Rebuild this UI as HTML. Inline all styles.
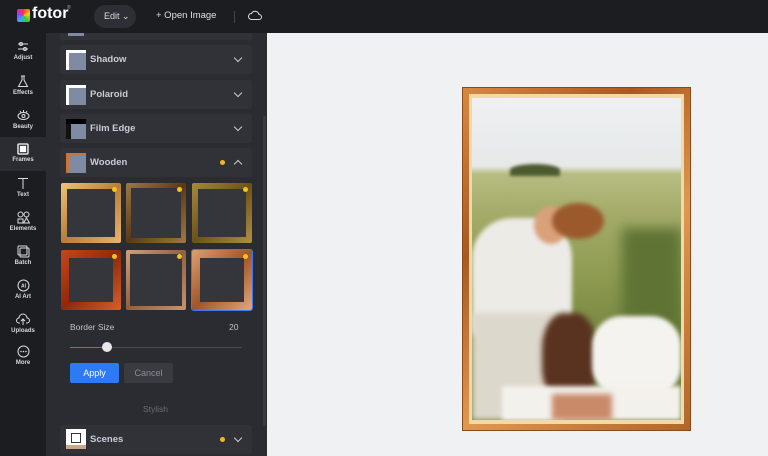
<!DOCTYPE html>
<html><head><meta charset="utf-8"><style>
*{box-sizing:border-box;margin:0;padding:0}
body{width:768px;height:456px;overflow:hidden;background:#f0f1f3;font-family:"Liberation Sans",sans-serif;position:relative}
.top{position:absolute;left:0;top:0;width:768px;height:33px;background:#1c1d21}
.side{position:absolute;left:0;top:33px;width:46px;height:423px;background:#1c1d21}
.panel{position:absolute;left:46px;top:33px;width:221px;height:423px;background:#2b2c31}
.canvas{position:absolute;left:267px;top:33px;width:501px;height:423px;background:#f0f1f3}
.si{position:absolute;left:0;width:46px;text-align:center;color:#d8d9de;font-size:6px;font-weight:bold}
.si svg{display:block;margin:0 auto 2px}
.row{position:absolute;left:60px;width:192px;height:29px;background:#313237;border-radius:3px;color:#c9ccd8;font-size:9.5px;font-weight:bold}
.row .th{position:absolute;left:6px;top:5px;width:20px;height:20px;background:#7f8aa3}
.row .t{position:absolute;left:30px;top:9px}
.chev{position:absolute;right:11px;top:10px;width:6px;height:6px;border-right:1.5px solid #ccc;border-bottom:1.5px solid #ccc;transform:rotate(45deg)}
.up{transform:rotate(-135deg);top:13px}
.dot{position:absolute;right:27px;top:12px;width:5px;height:5px;border-radius:50%;background:#f6b51e}
.fr{position:absolute;width:60px;height:60px;border-radius:2px}
.fr i{position:absolute;left:6px;top:6px;right:6px;bottom:6px;background:#35363b}
.fr b{position:absolute;right:4px;top:4px;width:5px;height:5px;border-radius:50%;background:#f6c21e}
.p{position:absolute}
</style></head><body>
<div class="top">
 <div style="position:absolute;left:17px;top:9px;width:13px;height:13px;border-radius:2px;background:conic-gradient(#f33,#fc0,#3c3,#3af,#a3f,#f33)"></div>
 <div style="position:absolute;left:32px;top:5px;color:#fff;font-size:16px;font-weight:bold">fotor</div>
 <div style="position:absolute;left:67px;top:5px;color:#aaa;font-size:5px">®</div>
 <div style="position:absolute;left:94px;top:5px;width:42px;height:23px;border-radius:12px;background:#2e2f34;color:#ddd;font-size:9px;line-height:23px;padding-left:10px">Edit ⌄</div>
 <div style="position:absolute;left:156px;top:10px;color:#e0e0e0;font-size:9.5px">+ Open Image</div>
 <div style="position:absolute;left:234px;top:11px;width:1px;height:12px;background:#444"></div>
 <svg style="position:absolute;left:248px;top:10px" width="14" height="10" viewBox="0 0 14 10"><path d="M3.5 9.5h7.5a2.5 2.5 0 0 0 0-5 4 4 0 0 0-7.5-1A3 3 0 0 0 3.5 9.5z" fill="none" stroke="#ddd" stroke-width="1"/></svg>
</div>
<div class="side">
 <div class="si" style="top:8px"><svg width="12" height="12" viewBox="0 0 12 12" stroke="#ddd" fill="none"><path d="M1 3h10M1 8h10"/><circle cx="4" cy="3" r="1.5"/><circle cx="8" cy="8" r="1.5"/></svg>Adjust</div>
 <div class="si" style="top:42px"><svg width="12" height="13" viewBox="0 0 12 13" stroke="#ddd" fill="none"><path d="M4 1h4M5 1v4L1.5 11.5h9L7 5V1"/></svg>Effects</div>
 <div class="si" style="top:76px"><svg width="13" height="13" viewBox="0 0 13 13" stroke="#ddd" fill="none"><ellipse cx="6.5" cy="7" rx="5.5" ry="3.5"/><circle cx="6.5" cy="7" r="1.5"/><path d="M3 2l1 1.5M6.5 1v2M10 2L9 3.5"/></svg>Beauty</div>
 <div style="position:absolute;left:0;top:104px;width:46px;height:34px;background:#2b2c31"></div>
 <div class="si" style="top:110px"><svg width="12" height="12" viewBox="0 0 12 12" fill="none" stroke="#fff" stroke-width="1.3"><rect x="1" y="1" width="10" height="10" rx="1"/><rect x="3.5" y="3.5" width="5" height="5" fill="#fff"/></svg>Frames</div>
 <div class="si" style="top:144px"><svg width="12" height="13" viewBox="0 0 12 13" fill="none" stroke="#ddd"><path d="M1 1.5h10M6 1.5V12"/></svg>Text</div>
 <div class="si" style="top:178px"><svg width="13" height="13" viewBox="0 0 13 13" fill="none" stroke="#ddd"><circle cx="3.5" cy="3.5" r="2.5"/><circle cx="9.5" cy="3.5" r="2.5"/><rect x="1" y="8" width="5" height="4"/><path d="M9.5 7l3 5h-6z"/></svg>Elements</div>
 <div class="si" style="top:212px"><svg width="13" height="13" viewBox="0 0 13 13" fill="none" stroke="#ddd"><rect x="1" y="1" width="9" height="9" rx="1"/><rect x="3" y="3" width="9" height="9" rx="1"/></svg>Batch</div>
 <div class="si" style="top:246px"><svg width="13" height="13" viewBox="0 0 13 13"><circle cx="6.5" cy="6.5" r="5.5" fill="none" stroke="#ddd"/><text x="6.5" y="8.5" font-size="5" fill="#ddd" text-anchor="middle" font-family="Liberation Sans" font-weight="bold">AI</text></svg>AI Art</div>
 <div class="si" style="top:280px"><svg width="14" height="13" viewBox="0 0 14 13" fill="none" stroke="#ddd"><path d="M4 10H3a2.5 2.5 0 0 1 0-5 4 4 0 0 1 8 0 2.5 2.5 0 0 1 0 5h-1M7 12V6M5 8l2-2 2 2"/></svg>Uploads</div>
 <div class="si" style="top:312px"><svg width="13" height="13" viewBox="0 0 13 13"><circle cx="6.5" cy="6.5" r="5.5" fill="none" stroke="#ddd"/><circle cx="4" cy="6.5" r=".8" fill="#ddd"/><circle cx="6.5" cy="6.5" r=".8" fill="#ddd"/><circle cx="9" cy="6.5" r=".8" fill="#ddd"/></svg>More</div>
</div>
<div class="panel"></div>
<div style="position:absolute;left:60px;top:33px;width:192px;height:7px;background:#313237"></div>
<div style="position:absolute;left:68px;top:33px;width:16px;height:3px;background:#7f8aa3"></div>
<div class="row" style="top:45px"><div class="th" style="background:linear-gradient(#fff,#fff) 0 0/20px 3px no-repeat,linear-gradient(#fff,#fff) 0 0/3px 20px no-repeat,#7f8aa3"></div><span class="t">Shadow</span><div class="chev"></div></div>
<div class="row" style="top:80px"><div class="th" style="background:linear-gradient(#fff,#fff) 0 0/20px 3px no-repeat,linear-gradient(#fff,#fff) 0 0/3px 20px no-repeat,#7f8aa3"></div><span class="t">Polaroid</span><div class="chev"></div></div>
<div class="row" style="top:114px"><div class="th" style="background:linear-gradient(#000,#000) 0 0/20px 5px no-repeat,linear-gradient(#111,#111) 0 0/5px 20px no-repeat,#7f8aa3"></div><span class="t">Film Edge</span><div class="chev"></div></div>
<div class="row" style="top:148px"><div class="th" style="border:3px solid #c8743a;border-width:3px 0 0 3px"></div><span class="t">Wooden</span><div class="dot"></div><div class="chev up"></div></div>
<div class="fr" style="left:61px;top:183px;background:linear-gradient(135deg,#f0c37a,#b87d3a,#e8b66b)"><i></i><b></b></div>
<div class="fr" style="left:126px;top:183px;background:linear-gradient(135deg,#9c7a45,#5a3a15,#a37b3e)"><i style="left:5px;top:5px;right:5px;bottom:5px"></i><b></b></div>
<div class="fr" style="left:192px;top:183px;background:linear-gradient(135deg,#a78a40,#6b5218,#b09043)"><i></i><b></b></div>
<div class="fr" style="left:61px;top:250px;background:linear-gradient(135deg,#c9451c,#8e2a0a,#d8602a)"><i style="left:8px;top:8px;right:8px;bottom:8px"></i><b></b></div>
<div class="fr" style="left:126px;top:250px;background:linear-gradient(135deg,#d1a07a,#936040,#c89470)"><i style="left:4px;top:4px;right:4px;bottom:4px"></i><b></b></div>
<div class="fr" style="left:192px;top:250px;background:linear-gradient(135deg,#e0a070,#a0552a,#e4a878);outline:1.5px solid #3d7bf5"><i style="left:8px;top:8px;right:8px;bottom:8px"></i><b></b></div>
<div style="position:absolute;left:70px;top:322px;color:#bfc2cc;font-size:8.5px">Border Size</div>
<div style="position:absolute;left:229px;top:322px;color:#bfc2cc;font-size:8.5px">20</div>
<div style="position:absolute;left:70px;top:347px;width:172px;height:1px;background:#4a4b52"></div>
<div style="position:absolute;left:70px;top:347px;width:37px;height:1px;background:#3d7bf5"></div>
<div style="position:absolute;left:102px;top:342px;width:10px;height:10px;border-radius:50%;background:#e8e8ea"></div>
<div style="position:absolute;left:70px;top:363px;width:49px;height:20px;border-radius:2px;background:#2d7bf4;color:#fff;font-size:9px;text-align:center;line-height:20px">Apply</div>
<div style="position:absolute;left:124px;top:363px;width:49px;height:20px;border-radius:2px;background:#3a3b41;color:#8a8c94;font-size:9px;text-align:center;line-height:20px">Cancel</div>
<div style="position:absolute;left:143px;top:404px;color:#6b6d76;font-size:8.5px">Stylish</div>
<div class="row" style="top:425px"><div class="th" style="background:#fff;top:4px"><div style="position:absolute;left:5px;top:4px;width:10px;height:10px;border:1.5px solid #333"></div><div style="position:absolute;left:0;bottom:0;width:20px;height:4px;background:#c9a98a"></div></div><span class="t">Scenes</span><div class="dot"></div><div class="chev"></div></div>
<div style="position:absolute;left:263px;top:116px;width:3px;height:310px;border-radius:2px;background:#3a3b40"></div>
<div style="position:absolute;left:267px;top:235px;width:9px;height:47px;background:#27282d;border-radius:0 6px 6px 0;color:#aaa;font-size:8px;line-height:47px;text-align:center">‹</div>
<div class="canvas"></div>
<div style="position:absolute;left:462px;top:87px;width:229px;height:344px;background:linear-gradient(135deg,#d68a40,#a85a20 30%,#e09850 60%,#b0652a);border:1px solid #8a4a1a"></div>
<div style="position:absolute;left:469px;top:94px;width:215px;height:330px;background:#f2d9a8"></div>
<div style="position:absolute;left:472px;top:98px;width:209px;height:322px;overflow:hidden;background:linear-gradient(#eef0f2 0,#e6e9e8 68px,#b7bd82 76px,#a6ad6c 110px,#8d9a50 180px,#6e7f3a 260px)">
 <div class="p" style="left:38px;top:66px;width:50px;height:12px;border-radius:50% 50% 0 0;background:#4d5a30;filter:blur(1.5px)"></div>
 <div class="p" style="left:150px;top:130px;width:60px;height:140px;background:#5f7434;filter:blur(6px)"></div>
 <div class="p" style="left:0;top:120px;width:100px;height:120px;border-radius:40px 40px 10px 10px;background:#ecebe6;filter:blur(2px)"></div>
 <div class="p" style="left:62px;top:108px;width:34px;height:38px;border-radius:50%;background:#d9a07a;filter:blur(2px)"></div>
 <div class="p" style="left:80px;top:105px;width:52px;height:36px;border-radius:50%;background:#9c5a2c;filter:blur(2px)"></div>
 <div class="p" style="left:0;top:215px;width:90px;height:107px;background:#ddd8cc;filter:blur(3px)"></div>
 <div class="p" style="left:70px;top:215px;width:55px;height:90px;border-radius:40%;background:#5a3320;filter:blur(3px)"></div>
 <div class="p" style="left:120px;top:218px;width:89px;height:80px;border-radius:30px;background:#f5f3ef;filter:blur(2px)"></div>
 <div class="p" style="left:30px;top:288px;width:179px;height:34px;background:#f3f1ec;filter:blur(2px)"></div>
 <div class="p" style="left:80px;top:296px;width:60px;height:26px;background:#c98a6a;filter:blur(3px)"></div>
</div>
</body></html>
